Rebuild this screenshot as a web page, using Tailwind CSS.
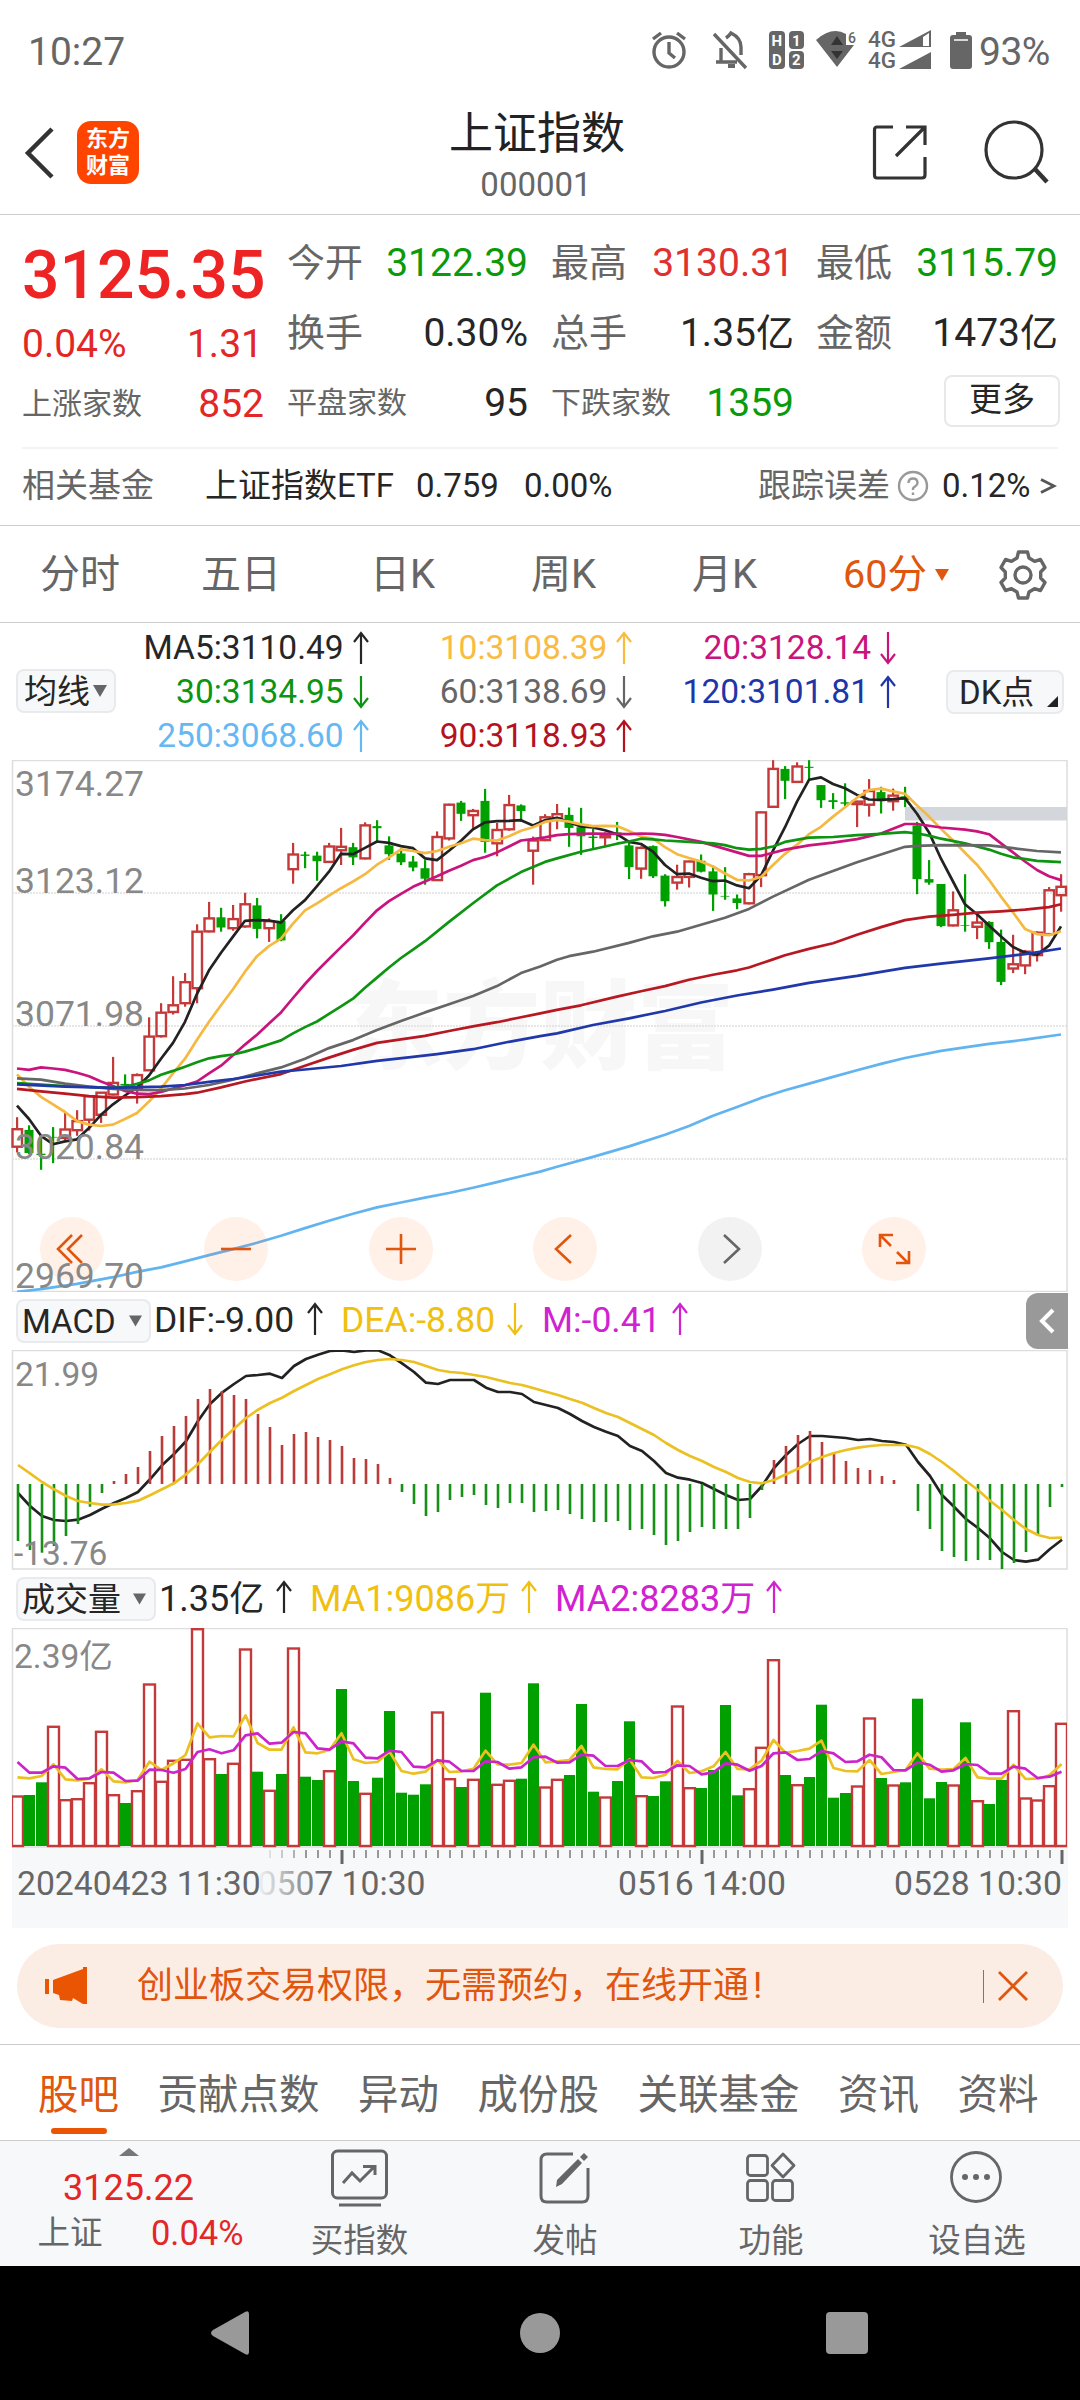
<!DOCTYPE html>
<html lang="zh-CN">
<head>
<meta charset="utf-8">
<title>上证指数 000001</title>
<script src="https://cdn.jsdelivr.net/npm/@tailwindcss/browser@4"></script>
</head>
<body class="w-[1080px] h-[2400px] overflow-hidden bg-white font-[Roboto,'Noto_Sans_CJK_SC',sans-serif] text-[#262626]">
<svg class="hidden">
  <symbol id="up" viewBox="0 0 18 34"><path d="M9 33V2M2 11L9 2L16 11" fill="none" stroke="currentColor" stroke-width="2.2"/></symbol>
  <symbol id="down" viewBox="0 0 18 34"><path d="M9 1V32M2 23L9 32L16 23" fill="none" stroke="currentColor" stroke-width="2.2"/></symbol>
  <symbol id="tri" viewBox="0 0 14 12"><path d="M0 0H14L7 12Z" fill="currentColor"/></symbol>
</svg>

<!-- status bar -->
<div class="h-[100px] flex justify-between items-center pl-[28px] pr-[29px] pt-[4px] text-[39px] leading-none text-[#666]">
  <span>10:27</span>
  <div class="flex items-center gap-[4px]">
    <svg class="w-[326px] h-[44px] mb-[4px]" viewBox="650 28 326 44" fill="none" stroke="#666" stroke-width="3.400">
      <circle cx="670" cy="52" r="15"/><path d="M670 42V53L676 58M654 39L662 33M686 39L678 33"/>
      <path d="M715 34L747 68M717 62H738M722 62V48M727 38Q730 36 732 33Q742 38 742 47V55"/><path d="M729 66H736" stroke-width="4"/>
      <g fill="#666" stroke="none"><rect x="770" y="31" width="16" height="18" rx="4"/><rect x="790" y="31" width="15" height="18" rx="4"/><rect x="770" y="51" width="16" height="18" rx="4"/><rect x="790" y="51" width="15" height="18" rx="4"/><path d="M770 40h16v20h-16z"/>
      <path d="M817 40Q833 26 847 34V45H855L838 67Z"/><path d="M832 45L838 36L844 45ZM832 51L838 59L844 51Z" fill="#333"/>
      <path d="M900 47L932 30V47ZM900 69L932 52V69Z"/><rect x="951" y="35" width="22" height="34" rx="3"/><rect x="957" y="32" width="10" height="5"/></g>
      <path d="M924 37V46H930V33Z" fill="#fff" stroke="none"/><path d="M955 40H969" stroke="#fff" stroke-width="1.5"/>
      <g fill="#fff" stroke="none" font-family="Roboto" font-weight="700" font-size="15"><text x="772.5" y="46">H</text><text x="793" y="46">1</text><text x="773" y="65">D</text><text x="793" y="65">2</text></g>
      <g fill="#666" stroke="none" font-family="Roboto" font-weight="500" font-size="22"><text x="869" y="46.5" textLength="28" lengthAdjust="spacingAndGlyphs">4G</text><text x="869" y="68" textLength="28" lengthAdjust="spacingAndGlyphs">4G</text><text x="849" y="43" font-size="14">6</text></g>
    </svg>
    <span class="w-[72px] tracking-[-0.5px]">93%</span>
  </div>
</div>

<!-- title bar -->
<header class="h-[115px] flex justify-between border-b border-[#ccc] pl-[24px] pr-[28px]">
  <div class="flex items-start w-[186px]">
    <svg class="w-[32px] h-[56px] mt-[25px]" viewBox="0 0 32 56" fill="none" stroke="#333" stroke-width="4.500"><path d="M28 4L4 28L28 52"/></svg>
    <div class="w-[62px] h-[63px] ml-[21px] mt-[21px] rounded-[14px] bg-[#ff4400] text-white text-[22px] font-bold leading-[27px] text-center pt-[4px]">东方<br>财富</div>
  </div>
  <div class="text-center">
    <h1 class="text-[44px] leading-[50px] mt-[9px] text-[#222]">上证指数</h1>
    <p class="text-[33px] leading-[40px] mt-[6px] pr-[2px] text-[#666]">000001</p>
  </div>
  <svg class="w-[188px] h-[80px] mt-[12px]" viewBox="864 112 188 80" fill="none" stroke="#333" stroke-width="3.200">
    <path d="M893 127H877Q874.500 127 874.500 130V175Q874.500 178 877 178H922Q925 178 925 175V157M906 127H925V145M925 127L896 156"/>
    <circle cx="1014" cy="150" r="28"/><path d="M1034 168L1047 182" stroke-width="4.500"/>
  </svg>
</header>

<!-- quote -->
<section class="h-[311px] border-b border-[#ccc]">
  <div class="pl-[22px] pt-[13px] flex gap-[25px] text-[39px]">
    <div class="w-[241px] text-[#e32626]">
      <div class="text-[66px] leading-[70px] font-medium h-[81px] pt-[13px] text-[#ee2424]"><span>3125.35</span></div>
      <div class="h-[70px] leading-[70px] flex justify-between"><span>0.04%</span><span class="mr-[0px]">1.31</span></div>
      <div class="h-[50px] leading-[50px] flex justify-between"><span class="text-[30px] text-[#666]">上涨家数</span><span class="-mr-[1px]">852</span></div>
    </div>
    <div class="w-[240px] leading-[70px]">
      <div class="flex justify-between"><span class="text-[38px] text-[#666] -ml-[1px]">今开</span><span class="text-[#0a9a0a]">3122.39</span></div>
      <div class="flex justify-between"><span class="text-[38px] text-[#666] -ml-[1px]">换手</span><span>0.30%</span></div>
      <div class="flex justify-between"><span class="text-[30px] text-[#666] -ml-[1px]">平盘家数</span><span>95</span></div>
    </div>
    <div class="w-[240px] leading-[70px]">
      <div class="flex justify-between"><span class="text-[38px] text-[#666] -ml-[2px]">最高</span><span class="text-[#e03030] -mr-[1px]">3130.31</span></div>
      <div class="flex justify-between"><span class="text-[38px] text-[#666] -ml-[2px]">总手</span><span class="-mr-[1px]">1.35<span class="text-[38px]">亿</span></span></div>
      <div class="flex justify-between"><span class="text-[30px] text-[#666] -ml-[2px]">下跌家数</span><span class="text-[#0a9a0a] -mr-[1px]">1359</span></div>
    </div>
    <div class="w-[240px] leading-[70px]">
      <div class="flex justify-between"><span class="text-[38px] text-[#666] -ml-[2px]">最低</span><span class="text-[#0a9a0a]">3115.79</span></div>
      <div class="flex justify-between"><span class="text-[38px] text-[#666] -ml-[2px]">金额</span><span>1473<span class="text-[38px]">亿</span></span></div>
      <div class="flex justify-end pt-[7px]"><span class="w-[116px] h-[52px] rounded-[8px] border-2 border-[#e8e8e8] text-[33px] leading-[46px] text-center -mr-[2px]">更多</span></div>
    </div>
  </div>
  <div class="mx-[22px] mt-[9px] border-t-2 border-[#f3f3f3] h-[76px] flex items-center text-[33px] leading-none pb-[1px]">
    <span class="text-[#666] w-[183px]">相关基金</span>
    <span class="w-[211px]">上证指数ETF</span><span class="w-[108px]">0.759</span><span class="w-[234px]">0.00%</span>
    <span class="text-[#666]">跟踪误差</span>
    <svg class="w-[32px] h-[32px] ml-[7px] mr-[13px]" viewBox="0 0 32 32" fill="none" stroke="#999" stroke-width="2.400"><circle cx="16" cy="16" r="14"/><path d="M11.500 13Q11.500 8.500 16 8.500T20.500 13Q20.500 15 18 16.500T16 20M16 22.500V25"/></svg>
    <span>0.12%</span>
    <svg class="w-[18px] h-[18px] ml-[8px]" viewBox="0 0 18 18" fill="none" stroke="#555" stroke-width="2.800"><path d="M2 2.500L15 9L2 15.500"/></svg>
  </div>
</section>

<!-- period tabs -->
<nav class="h-[97px] border-b border-[#ccc] flex items-center text-[40px] leading-none text-[#666] pl-[40px] pt-[1px]">
  <span class="w-[161px]">分时</span><span class="w-[169px]">五日</span><span class="w-[161px]">日K</span><span class="w-[161px]">周K</span><span class="w-[151px]">月K</span>
  <span class="text-[#e0560f] w-[92px] whitespace-nowrap text-[39.5px]">60分</span>
  <svg class="w-[14px] h-[12px] text-[#e0560f]"><use href="#tri"/></svg>
  <svg class="w-[52px] h-[52px] ml-[48px]" viewBox="0 0 52 52" fill="none" stroke="#666" stroke-width="3.400" stroke-linejoin="round"><path d="M21.500 3H30.500L32 9L37.500 12.300L43.500 10.500L48 18.500L43.700 23V29L48 33.500L43.500 41.500L37.500 39.700L32 43L30.500 49H21.500L20 43L14.500 39.700L8.500 41.500L4 33.500L8.300 29V23L4 18.500L8.500 10.500L14.500 12.300L20 9Z"/><circle cx="26" cy="26" r="8"/></svg>
</nav>

<!-- moving-average legend -->
<section class="h-[137px] flex text-[33.5px]">
  <div class="w-[106px] pl-[16px] pt-[46px]"><div class="w-[100px] h-[44px] rounded-[8px] border-2 border-[#e8eaee] bg-[#f7f8fa] flex items-center pl-[6px] gap-[3px] leading-none text-[33px]"><span class="shrink-0">均线</span><svg class="w-[14px] h-[12px] text-[#666] shrink-0"><use href="#tri"/></svg></div></div>
  <div class="grid grid-cols-3 w-[791px] auto-rows-[44px] pt-[3px] leading-[44px]">
    <div class="flex justify-end items-center gap-[8px]">MA5:3110.49<svg class="w-[18px] h-[34px]"><use href="#up"/></svg></div>
    <div class="flex justify-end items-center gap-[8px] text-[#f9bb40]">10:3108.39<svg class="w-[18px] h-[34px]"><use href="#up"/></svg></div>
    <div class="flex justify-end items-center gap-[8px] text-[#c8147c]">20:3128.14<svg class="w-[18px] h-[34px]"><use href="#down"/></svg></div>
    <div class="flex justify-end items-center gap-[8px] text-[#0d9410]">30:3134.95<svg class="w-[18px] h-[34px]"><use href="#down"/></svg></div>
    <div class="flex justify-end items-center gap-[8px] text-[#666]">60:3138.69<svg class="w-[18px] h-[34px]"><use href="#down"/></svg></div>
    <div class="flex justify-end items-center gap-[8px] text-[#2036a8]"><span class="mr-[2px]">120:3101.81</span><svg class="w-[18px] h-[34px]"><use href="#up"/></svg></div>
    <div class="flex justify-end items-center gap-[8px] text-[#66b8f2]">250:3068.60<svg class="w-[18px] h-[34px]"><use href="#up"/></svg></div>
    <div class="flex justify-end items-center gap-[8px] text-[#b5121f]">90:3118.93<svg class="w-[18px] h-[34px]"><use href="#up"/></svg></div>
  </div>
  <div class="pl-[49px] pt-[47px]"><div class="w-[118px] h-[44px] rounded-[8px] border-2 border-[#e8eaee] bg-[#f7f8fa] flex items-center pl-[11px] leading-none text-[33px]"><span class="shrink-0">DK点</span><svg class="w-[11px] h-[11px] ml-[13px] mt-[18px]" viewBox="0 0 11 11"><path d="M11 0V11H0Z" fill="#222"/></svg></div></div>
</section>

<!-- candlestick chart -->
<svg id="kline" class="block w-[1080px] h-[532px]" viewBox="0 760 1080 532"></svg>

<!-- MACD -->
<section class="h-[58px] flex items-center text-[35.5px] leading-none pl-[16px] pr-[12px]">
  <div class="w-[135px] h-[44px] rounded-[8px] border-2 border-[#e8eaee] bg-[#f7f8fa] flex items-center justify-between pl-[4px] pr-[7px] text-[33px] mr-[3px]">MACD<svg class="w-[13px] h-[12px] text-[#666]"><use href="#tri"/></svg></div>
  <span class="w-[152px]">DIF:-9.00</span><svg class="w-[18px] h-[36px] mb-[4px]"><use href="#up"/></svg>
  <span class="text-[#f0c010] w-[165px] ml-[17px]">DEA:-8.80</span><svg class="w-[18px] h-[36px] mb-[4px] text-[#f0c010]"><use href="#down"/></svg>
  <span class="text-[#d022d0] w-[129px] ml-[18px]">M:-0.41</span><svg class="w-[18px] h-[36px] mb-[4px] text-[#d022d0]"><use href="#up"/></svg>
  <div class="ml-auto w-[42px] h-[56px] rounded-l-[12px] bg-[#999] flex items-center justify-center"><svg class="w-[18px] h-[28px]" viewBox="0 0 18 28" fill="none" stroke="#fff" stroke-width="4"><path d="M15 3L4 14L15 25"/></svg></div>
</section>
<svg id="macd" class="block w-[1080px] h-[220px]" viewBox="0 1350 1080 220"></svg>

<!-- volume -->
<section class="h-[58px] flex items-center text-[36px] leading-none pl-[16px]">
  <div class="w-[140px] h-[44px] rounded-[8px] border-2 border-[#e8eaee] bg-[#f7f8fa] flex items-center justify-between pl-[4px] pr-[8px] text-[33px] mr-[3px]">成交量<svg class="w-[13px] h-[12px] text-[#666]"><use href="#tri"/></svg></div>
  <span class="w-[116px]">1.35<span class="text-[35px]">亿</span></span><svg class="w-[18px] h-[36px] mb-[4px]"><use href="#up"/></svg>
  <span class="text-[#f0c010] w-[210px] ml-[17px]">MA1:9086<span class="text-[35px]">万</span></span><svg class="w-[18px] h-[36px] mb-[4px] text-[#f0c010]"><use href="#up"/></svg>
  <span class="text-[#d022d0] w-[210px] ml-[17px]">MA2:8283<span class="text-[35px]">万</span></span><svg class="w-[18px] h-[36px] mb-[4px] text-[#d022d0]"><use href="#up"/></svg>
</section>
<svg id="vol" class="block w-[1080px] h-[300px]" viewBox="0 1628 1080 300"></svg>

<!-- promotion -->
<div class="h-[116px] pt-[16px] px-[17px]">
  <div class="h-[84px] rounded-full bg-[#fcede4] flex items-center text-[#e0560f] text-[36px] leading-none pl-[28px] pr-[34px]">
    <svg class="w-[43px] h-[38px]" viewBox="0 0 43 38" fill="#ea5504"><path d="M0 12H4V27H0ZM8 13L38 2V0H42V37H38L28 31L27 34L15 33L14 28L8 26Z"/></svg>
    <span class="ml-[49px]">创业板交易权限，无需预约，在线开通<span class="ml-[4px]">!</span></span>
    <span class="ml-auto w-[1px] h-[33px] bg-[#e0560f]"></span>
    <svg class="w-[32px] h-[32px] ml-[13px]" viewBox="0 0 32 32" stroke="#e0560f" stroke-width="2.800"><path d="M2 2L30 30M30 2L2 30"/></svg>
  </div>
</div>

<!-- content tabs -->
<nav class="h-[97px] border-y border-[#ccc] flex gap-[38.500px] pl-[38px] pt-[21px] text-[40.500px] leading-[58px] text-[#666] whitespace-nowrap">
  <div class="text-[#e0560f]">股吧<div class="w-[56px] h-[6px] rounded-[3px] bg-[#ea5504] ml-[13px] mt-[4px]"></div></div>
  <span>贡献点数</span><span>异动</span><span>成份股</span><span>关联基金</span><span>资讯</span><span>资料</span>
</nav>

<!-- action bar -->
<div class="h-[125px] bg-[#f7f8fa] flex text-[32.500px] text-[#666] leading-[40px]">
  <div class="w-[257px] flex flex-col items-center text-[#e32626]">
    <svg class="w-[20px] h-[8px] mt-[7px]" viewBox="0 0 20 8"><path d="M10 0L20 8H0Z" fill="#777"/></svg>
    <span class="text-[36px] mt-[12px]">3125.22</span>
    <div class="flex justify-between w-[206px] ml-[24px] mt-[5px]"><span class="text-[#666]">上证</span><span class="text-[34.500px]">0.04%</span></div>
  </div>
  <div class="w-[205px] flex flex-col items-center">
    <svg class="w-[60px] h-[60px] mt-[6px] mb-[14px]" viewBox="0 0 60 60" fill="none" stroke="#666" stroke-width="3"><rect x="2.500" y="4" width="54" height="47" rx="5"/><path d="M9 58H51M13 36L22 26L30 34L44 20M33 19.500H45V28"/></svg>买指数
  </div>
  <div class="w-[206px] flex flex-col items-center">
    <svg class="w-[60px] h-[60px] mt-[6px] mb-[14px]" viewBox="0 0 60 60" fill="none" stroke="#666" stroke-width="3"><path d="M38 7H12Q6 7 6 13V49Q6 55 12 55H47Q53 55 53 49V21"/><path d="M21 40L22 33L43 12L47 16L27 37ZM45 10L49 6L53 10L49 14Z" fill="#666" stroke="none"/></svg>发帖
  </div>
  <div class="w-[206px] flex flex-col items-center">
    <svg class="w-[60px] h-[60px] mt-[6px] mb-[14px]" viewBox="0 0 60 60" fill="none" stroke="#666" stroke-width="2.800"><rect x="6.500" y="8.500" width="20" height="20" rx="3"/><rect x="6.500" y="33.500" width="20" height="20" rx="3"/><rect x="31.500" y="33.500" width="20" height="20" rx="3"/><path d="M42 7L53 18.500L42 30L31 18.500Z" stroke-linejoin="round"/></svg>功能
  </div>
  <div class="w-[206px] flex flex-col items-center">
    <svg class="w-[60px] h-[60px] mt-[6px] mb-[14px]" viewBox="0 0 60 60" fill="none" stroke="#666" stroke-width="2.800"><circle cx="29" cy="30" r="24.500"/><g fill="#666" stroke="none"><circle cx="18" cy="30" r="3"/><circle cx="29" cy="30" r="3"/><circle cx="40" cy="30" r="3"/></g></svg>设自选
  </div>
</div>

<!-- system navigation -->
<div class="h-[134px] bg-black flex justify-between items-center pl-[210px] pr-[212px]">
  <svg class="w-[40px] h-[46px]" viewBox="0 0 40 46"><path d="M3 20L35 2Q39 0 39 4V42Q39 46 35 44L3 26Q-1 23 3 20Z" fill="#999"/></svg>
  <div class="w-[40px] h-[40px] rounded-full bg-[#999] ml-[4px]"></div>
  <div class="w-[42px] h-[42px] rounded-[4px] bg-[#999]"></div>
</div>

<script>
const N = 88, PITCH = 12, RED = '#c43a3a', GREEN = '#00a000';
const x0 = i => 17 + i * PITCH;
const kY = v => 750 + v / 2.851, mY = v => 1340 + v / 3, vY = v => 1570 + v / 3;
const f = n => n.toFixed(1);
const poly = (pts, y, c, dx = 0, w = 2.7) => `<polyline fill="none" stroke="${c}" stroke-width="${w}" stroke-linejoin="round" points="${pts.map(([i, v]) => f(x0(i) + dx) + ',' + f(y(v))).join(' ')}"/>`;
const dense = s => s.split(' ').map((v, i) => [i, +v]);
const sparse = s => s.split(' ').map(p => p.split(':').map(Number));
const rect = (x, y, w, h, a) => `<rect x="${f(x)}" y="${f(y)}" width="${f(w)}" height="${f(Math.max(h, 0.5))}" ${a}/>`;
const frame = (y1, y2) => `<rect x="12.5" y="${y1 + .5}" width="1054.5" height="${y2 - y1}" fill="none" stroke="#ddd" stroke-width="1.5"/>`;
const label = (x, y, t, c = '#888', s = 35, extra = '') => `<text x="${x}" y="${y}" fill="${c}" font-size="${s}" ${extra}>${t}</text>`;

/* colour, body top, body bottom, high, low */
const candles = `R1081,1131,1047,1147 G1083,1149,1070,1152 G1151,1155,1100,1197 G1103,1105,1075,1178 R1082,1106,1030,1112 R1058,1084,1027,1100 R987,1054,985,1085 R977,1040,977,1063 R949,982,875,985 G952,956,925,970 R927,965,922,1008 R817,913,762,915 R749,816,722,820 R728,747,645,754 R662,722,636,732 R518,679,497,722 R480,517,433,520 G477,506,450,518 R482,508,442,515 R440,503,407,507 G443,510,422,537 R488,508,480,547 G487,543,468,545 R298,340,265,381 G298,302,290,337 G301,317,290,373 R275,319,265,322 R276,286,222,328 G277,306,265,328 R215,309,206,312 G217,223,200,262 G272,297,246,313 G295,320,280,328 G318,335,302,346 G337,367,314,384 R248,371,232,373 R156,252,153,258 G150,182,145,202 R174,186,168,225 G145,262,111,293 R228,266,208,303 R157,226,128,230 G158,174,155,205 R258,287,247,384 R192,257,183,260 R183,194,154,226 G185,222,164,276 G220,246,165,299 G247,251,225,283 R243,249,235,277 G235,237,205,257 G272,334,265,368 R279,338,275,367 G274,360,272,365 G358,431,354,446 R362,378,327,398 R318,362,316,392 G316,347,298,349 G346,412,330,459 G416,418,334,427 G423,436,412,454 R354,437,350,440 R178,357,176,391 R54,162,29,165 G54,88,46,140 R47,91,35,94 G48,51,29,85 G100,143,100,165 G143,148,123,168 G149,153,95,160 R147,154,145,220 R117,156,83,190 G120,146,105,181 R130,146,110,173 G132,142,105,163 G215,368,205,411 G368,378,314,384 G382,502,382,505 R457,500,403,503 G499,501,354,518 R492,504,463,539 G490,548,488,567 G547,661,512,670 R611,623,527,636 R575,614,570,639 R521,585,517,603 R400,525,391,527 R390,414,354,461`.split(' ');

let k = `<g font-family="'Noto Sans CJK SC'" font-weight="900">${label(346, 1061, '东方财富', '#f7f7f7', 97)}</g>`;
for (const y of [893, 1026, 1159]) k += `<path d="M12 ${y}H1067" stroke="#e0e0e0" stroke-width="1.5" stroke-dasharray="2 1"/>`;
k += frame(760, 1291) + rect(905, 807, 162, 13.5, 'fill="#d3d6db"');
candles.forEach((s, i) => {
  const up = s[0] === 'R', [t, b, h, l] = s.slice(1).split(',').map(v => kY(+v)), x = x0(i), c = up ? RED : GREEN;
  k += rect(x - 1, h, 2.2, up ? t - h : l - h, `fill="${c}"`);
  if (up) k += rect(x - 1, b, 2.2, l - b, `fill="${c}"`) + rect(x - 4.5, t, 9.5, b - t, `fill="none" stroke="${c}" stroke-width="2.4"`);
  else k += rect(x - 4.5, t, 9, b - t, `fill="${c}"`);
});
k += poly(sparse('0:1545 2:1537 5:1522 8:1503 10:1488 12:1475 14:1458 16:1440 18:1423 20:1405 22:1385 24:1363 26:1342 28:1322 30:1304 32:1290 34:1276 36:1263 38:1248 40:1232 42:1215 43.6:1202 45:1188 48:1160 51:1130 54:1097 56:1072 58:1043 60:1018 62:992 64:970 66:951 68:932 70:913 72:895 74:878 77:858 81:838 84:826 87:811'), kY, '#62b4f0');
k += poly(dense('1014 1052 1100 1124 1116 1110 1078 1040 1010 985 962 928 880 835 775 695 628 578 532 487 485 486 492 457 428 388 347 296 297 279 261 265 274 280 309 314 287 259 226 206 203 202 200 215 200 193 206 218 221 229 240 262 268 290 328 354 352 364 374 372 386 394 358 287 220 147 85 78 97 109 128 141 142 140 137 182 235 310 375 440 468 500 532 562 577 584 558 503'), kY, '#222');
k += poly(dense('925 960 989 1010 1032 1058 1068 1072 1068 1052 1035 1002 965 922 880 826 775 728 682 632 588 559 538 495 457 437 415 394 375 354 327 306 283 288 294 288 276 266 253 257 258 246 230 220 205 199 204 212 217 216 217 231 247 253 277 297 308 318 332 352 370 372 362 328 296 270 240 219 190 163 136 114 110 118 125 158 190 225 258 293 327 370 418 463 510 525 528 517'), kY, '#f5b942');
k += poly(sparse('0:908 1:912 2:905 3:908 4:912 5:920 6:930 7:945 8:958 9:972 10:980 11:981 12:975 13:965 14:956 15:945 16:922 17:900 18:870 19:840 20:812 21:780 22:748 23:707 24:667 25:630 26:596 27:562 28:529 29:492 30:457 31:431 32:410 33:390 34:375 35:360 36:344 37:330 38:314 39:305 40:292 41:275 42:258 43:254 44:249 45:243 46:240 48:238 51:240 52:238 53:239 54:242 55:248 57:262 59:282 61:302 62:302 63:293 64:284 66:272 68:264 70:254 72:238 74:211 75:211 77:221 79:227 80:232 81:240 82:266 83:292 84:318 85:342 86:360 87:371'), kY, '#c8147c');
k += poly(sparse('0:950 4:958 8:963 9:960 10:952 11:942 12:926 13:915 14:903 15:890 16:879 17:873 18:868 19:860 20:850 21:839 22:828 23:808 24:790 25:774 26:752 27:731 28:709 29:678 30:649 31:620 32:593 33:569 34:545 36:490 38:437 40:386 42:348 44:319 45:309 47:290 49:275 50:267 51:261 52:253 53:255 54:258 56:262 58:266 59:271 60:280 61:284 62:282 63:275 64:262 66:250 68:248 70:243 72:239 74:234 75:238 76:244 77:253 79:266 80:275 81:284 82:296 83:306 85:316 87:320'), kY, '#0d9410');
k += poly(sparse('0:936 2:940 4:951 6:960 8:966 10:969 12:970 14:965 16:955 18:940 20:922 22:905 24:880 26:850 28:827 30:798 32:773 34:748 36:725 38:701 40:673 42:636 43.6:617 45:598 46:588 48:575 51:550 53:531 55:518 57:498 59:478 61:453 63:418 66:370 68:345 70:320 72:298 74:276 75:273 77:271 81:272 83:280 85:288 87:292'), kY, '#666');
k += poly(sparse('0:966 2:973 4:980 6:987 8:991 10:990 12:987 14:981 15:977 17:962 19:945 22:924 24:900 26:877 28:855 30:835 32:825 34:815 36:801 38:788 40:776 42:762 43.6:751 45:741 47:728 50:703 52:688 54:673 56:655 58:641 60:628 61:620 63:597 64:585 66:567 68:551 70:527 72:505 74:485 76:475 78:470 80:464 82:460 84:455 86:448 87:440'), kY, '#b81822');
k += poly(sparse('0:953 4:960 8:963 12:960 14:955 16:946 18:938 20:928 22:917 24:911 27:901 30:886 33:875 35:867 38:853 41:832 43.6:816 45:808 48:784 51:765 54:744 57:720 60:700 63:683 66:664 70:644 74:621 77:609 81:594 84:582 87:566'), kY, '#2038aa');
[72, 236, 401, 565, 730, 894].forEach((x, n) => k += `<circle cx="${x}" cy="1249" r="32" fill="${n === 4 ? '#444' : '#ff6a20'}" fill-opacity="${n === 4 ? .07 : .1}"/>`);
const ic = (d, c = '#e0560f') => `<path d="${d}" fill="none" stroke="${c}" stroke-width="2.6"/>`;
k += ic('M72 1235L58 1249L72 1263M82 1235L68 1249L82 1263') + ic('M221 1249H251') + ic('M386 1249H416M401 1234V1264') + ic('M571 1235L556 1249L571 1263') + ic('M724 1235L739 1249L724 1263', '#666') + ic('M880 1247V1235H893M880 1235L891 1246M897 1252L908 1263M909 1251V1263H896');
[[795.5, '3174.27'], [892.5, '3123.12'], [1025.5, '3071.98'], [1158.500, '3020.84'], [1287.5, '2969.70']].forEach(([y, t]) => k += label(15, y, t, '#888', 35.5));
kline.innerHTML = k;

const macdBars = '603 630 638 618 588 552 500 459 423 402 381 333 288 258 228 177 147 153 165 177 222 261 315 282 276 291 300 318 354 357 372 414 456 492 528 516 480 471 465 495 504 489 489 516 513 510 522 537 546 546 543 570 567 585 615 603 576 561 567 567 567 534 450 360 318 285 273 306 339 363 384 390 408 420 432 513 567 633 651 663 660 660 687 669 636 582 501 441'.split(' ');
let m = frame(1350, 1568.5);
m += poly(dense('459 498 528 540 543 539 525 506 489 474 456 418 376 342 304 243 192 158 132 108 105 101 114 78 57 44 33 31 36 31 31 46 70 96 128 132 120 120 120 143 156 156 162 186 195 204 222 243 261 275 288 318 333 363 399 413 419 429 447 465 480 477 438 384 345 312 288 288 291 294 300 297 303 306 314 366 408 465 500 537 564 595 636 660 665 659 627 599'), mY, '#222', 1, 2.7);
macdBars.forEach((s, i) => { const v = +s; if (v !== 432) m += rect(x0(i) - .3, Math.min(mY(v), 1484), 2.6, Math.abs(mY(v) - 1484), `fill="${v < 432 ? '#bb3a3a' : '#169016'}"`); });
m += poly(dense('375 400 426 448 468 483 489 494 493 489 482 466 448 430 403 372 335 299 266 234 209 189 173 153 135 117 103 88 76 66 60 57 60 66 78 90 96 99 105 111 120 129 135 145 155 165 177 188 204 219 231 249 267 285 309 330 348 363 381 396 414 426 430 420 403 386 366 351 339 330 323 318 315 315 315 323 342 366 393 423 450 482 510 540 567 585 594 593'), mY, '#ecc020', 1, 2.7);
m += label(15, 1385.5, '21.99', '#888', 33.5) + label(14, 1564.5, '-13.76', '#888', 33.5);
macd.innerHTML = m;

const volume = 'R678 G675 G637 R469 R689 R686 R638 R484 R674 G699 R662 R342 R634 R571 R568 R176 R566 G612 R580 R237 G605 R661 G612 R234 G620 G630 R602 G357 G633 R670 G623 G423 G668 G674 G643 R426 R626 G651 R628 G368 R643 R631 G626 G340 R651 R628 G615 G402 G665 R681 G633 G454 R677 G678 G634 R408 R653 G654 G600 G405 G676 R656 R532 R269 G615 R644 G621 G404 G683 G669 R648 R444 G624 R645 G637 G386 G685 G636 R645 G457 R692 G702 G630 R422 R684 R690 R647 R460'.split(' ');
let v = rect(12, 1847, 1056, 81, 'fill="#f7f8fa"') + frame(1628, 1846.500);
v += '<clipPath id="plot"><rect x="12" y="1628" width="1055" height="220"/></clipPath><g clip-path="url(#plot)">';
volume.forEach((s, i) => {
  const top = vY(+s.slice(1)), x = x0(i);
  v += s[0] === 'R' ? rect(x - 5, top + .5, 11, 1845.5 - top, `fill="#fff" stroke="${RED}" stroke-width="2.4"`) : rect(x - 5, top, 11, 1846 - top, `fill="${GREEN}"`);
});
v += '</g>';
v += poly(dense('622 625 618 583 628 631 626 598 634 637 630 575 600 580 555 460 502 498 499 436 519 539 539 472 547 550 540 490 568 579 576 545 603 611 605 570 606 604 596 542 583 584 579 524 577 574 570 528 592 597 598 568 622 624 614 573 609 604 589 546 597 598 572 510 548 543 536 512 594 603 604 570 612 606 600 550 596 599 597 564 622 626 626 584 627 626 616 582'), vY, '#ecc020', .5, 2.7);
v += poly(dense('576 608 608 589 593 627 625 606 608 633 632 599 600 608 597 546 538 550 541 496 490 521 518 486 490 535 539 514 520 563 565 542 546 590 592 571 575 603 603 574 576 596 592 562 560 578 577 554 557 588 588 570 574 608 606 586 588 613 607 580 584 602 588 550 547 570 567 543 550 576 574 554 562 600 601 577 584 605 601 582 585 611 611 590 596 624 620 605'), vY, '#cc24cc', .5, 2.7);
for (let i = 21; i < N; i++) {
  const long = [27, 57, 87].includes(i);
  v += rect(x0(i) + (long ? -.5 : 0), 1850, long ? 3 : 2, long ? 14 : 8, `fill="${long ? '#666' : '#999'}" opacity="${Math.min(1, (i - 20) / 4)}"`);
}
v += '<linearGradient id="fade" gradientUnits="userSpaceOnUse" x1="255" x2="322" y1="0" y2="0"><stop offset="0" stop-color="#666" stop-opacity="0"/><stop offset="1" stop-color="#666"/></linearGradient>';
v += label(14, 1667.5, '2.39亿', '#888', 33.5) + label(17, 1895, '20240423 11:30', '#666', 33.7) + label(425.5, 1895, '0507 10:30', 'url(#fade)', 33.7, 'text-anchor="end"') + label(618, 1895, '0516 14:00', '#666', 33.7) + label(894, 1895, '0528 10:30', '#666', 33.7);
vol.innerHTML = v;
</script>
</body>
</html>
